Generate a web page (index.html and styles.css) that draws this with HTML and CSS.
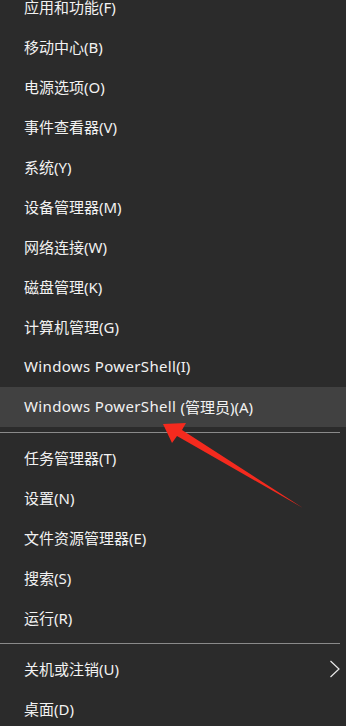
FILE: index.html
```html
<!DOCTYPE html>
<html lang="zh-CN">
<head>
<meta charset="utf-8">
<title>Win+X 菜单</title>
<link rel="stylesheet" href="styles.css">
</head>
<body>
<div class="menu">
  <div class="group">
    <div class="item">应用和功能(F)</div>
    <div class="item">移动中心(B)</div>
    <div class="item">电源选项(O)</div>
    <div class="item">事件查看器(V)</div>
    <div class="item">系统(Y)</div>
    <div class="item">设备管理器(M)</div>
    <div class="item">网络连接(W)</div>
    <div class="item">磁盘管理(K)</div>
    <div class="item">计算机管理(G)</div>
    <div class="item"><span class="lat">Windows PowerShell</span>(I)</div>
    <div class="item active"><span class="lat">Windows PowerShell </span>(管理员)(A)</div>
  </div>
  <div class="sep"></div>
  <div class="group">
    <div class="item">任务管理器(T)</div>
    <div class="item">设置(N)</div>
    <div class="item">文件资源管理器(E)</div>
    <div class="item">搜索(S)</div>
    <div class="item">运行(R)</div>
  </div>
  <div class="sep"></div>
  <div class="group">
    <div class="item has-sub"><span>关机或注销(U)</span><svg class="chev" width="12" height="18" viewBox="0 0 12 18"><path d="M1.5 1 L10 9 L1.5 17" fill="none" stroke="#e8e8e8" stroke-width="1.2"/></svg></div>
    <div class="item">桌面(D)</div>
  </div>
</div>
<svg class="arrow" width="346" height="726" viewBox="0 0 346 726">
  <polygon points="163,424 186,423 182,430 303,508 177,436 172,443" fill="#f42a1e"/>
</svg>
</body>
</html>
```
FILE: styles.css
```css
html, body {
  margin: 0;
  padding: 0;
  background: #2b2b2b;
  overflow: hidden;
}
body {
  width: 346px;
  height: 726px;
  position: relative;
  font-family: "Noto Sans", "Noto Sans CJK SC", sans-serif;
  font-size: 15px;
  color: #f2f2f2;
}
.menu {
  margin-top: -13px;
  display: flex;
  flex-direction: column;
}
.group {
  display: flex;
  flex-direction: column;
}
.item {
  height: 40px;
  box-sizing: border-box;
  padding-bottom: 2px;
  display: flex;
  align-items: center;
  padding-left: 24px;
  position: relative;
  white-space: nowrap;
}
.lat {
  letter-spacing: 0.35px;
  white-space: pre;
}
.item.active {
  background: #414141;
}
.sep {
  height: 1px;
  width: 340px;
  background: #8a8a8a;
  margin: 5px 0;
}
.chev {
  position: absolute;
  right: 5px;
  top: 11px;
}
.arrow {
  position: absolute;
  left: 0;
  top: 0;
  pointer-events: none;
}
```
